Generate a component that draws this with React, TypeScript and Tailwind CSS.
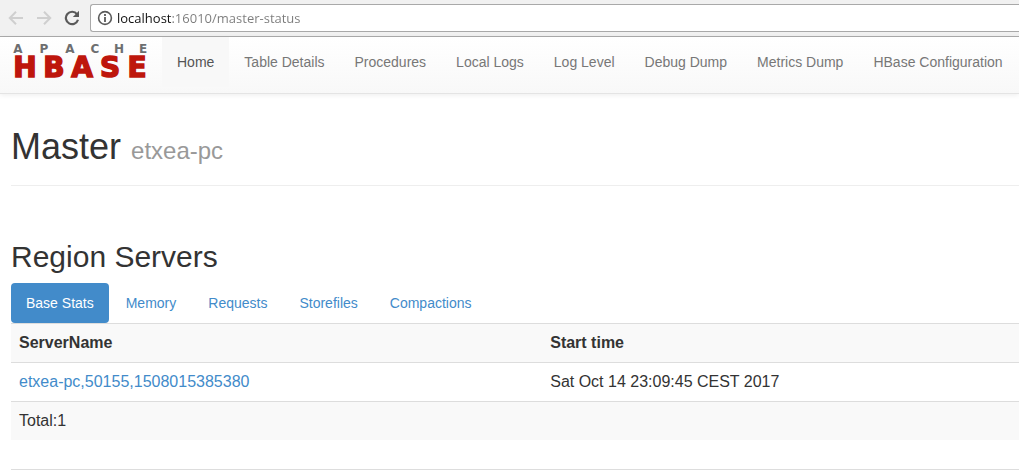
import { clsx } from 'clsx'

const navLinks = [
  'Home',
  'Table Details',
  'Procedures',
  'Local Logs',
  'Log Level',
  'Debug Dump',
  'Metrics Dump',
  'HBase Configuration',
]

const tabs = ['Base Stats', 'Memory', 'Requests', 'Storefiles', 'Compactions']

const BrowserBar = () => {
  return (
    <div className="flex items-center h-[37px] pl-2 bg-[#f1f1f1] border-b border-[#acacac]">
      <div className="flex items-center gap-3">
        <button aria-label="Back" className="text-[#cfcfcf]">
          <svg width="16" height="16" viewBox="0 0 16 16" fill="none" stroke="currentColor" strokeWidth="2">
            <path d="M15 8H2.5M8 1.8L1.8 8L8 14.2" />
          </svg>
        </button>
        <button aria-label="Forward" className="text-[#cfcfcf]">
          <svg width="16" height="16" viewBox="0 0 16 16" fill="none" stroke="currentColor" strokeWidth="2">
            <path d="M1 8H13.5M8 1.8L14.2 8L8 14.2" />
          </svg>
        </button>
        <button aria-label="Reload" className="text-[#5a5a5a]">
          <svg width="16" height="16" viewBox="0 0 16 16">
            <path d="M13 4.2A6.2 6.2 0 1 0 14 9.8" fill="none" stroke="currentColor" strokeWidth="2.2" />
            <path d="M15 0.8V7H8.8Z" fill="currentColor" />
          </svg>
        </button>
      </div>

      <div className="flex flex-1 items-center gap-1 h-7 ml-[10px] pl-[6px] bg-white border border-r-0 border-[#a9a9a9] rounded-l-[3px]">
        <svg width="16" height="16" viewBox="0 0 16 16" className="text-[#5a5a5a]">
          <circle cx="8" cy="8" r="6.4" fill="none" stroke="currentColor" strokeWidth="1.6" />
          <path d="M7.1 4.1h1.8v1.8H7.1zM7.1 7h1.8v5H7.1z" fill="currentColor" />
        </svg>
        <input
          type="text"
          aria-label="Address"
          defaultValue="localhost:16010/master-status"
          className="flex-1 min-w-0 outline-none font-['Open_Sans',sans-serif] text-[13px] leading-5 text-transparent bg-clip-text bg-[linear-gradient(to_right,#111_55px,#7b7b7b_55px)]"
        />
      </div>
    </div>
  )
}

const Logo = () => {
  return (
    <a href="#" aria-label="Apache HBase" className="block mt-1 font-['DejaVu_Sans',sans-serif] font-bold">
      <svg width="136" height="46" viewBox="0 0 136 46" textAnchor="middle">
        <text x="6 32 58 83 107 131" y="12" fontSize="12" fill="#6d6e70">
          APACHE
        </text>
        <text
          x="13 42 70 98 125"
          y="36"
          fontSize="28"
          fill="#be160c"
          stroke="#be160c"
          strokeWidth="1.5"
        >
          HBASE
        </text>
      </svg>
    </a>
  )
}

const Navbar = () => {
  return (
    <nav className="flex items-start h-[57px] pl-3 bg-linear-to-b from-white to-[#f8f8f8] border-b border-[#e4e4e4] shadow-[0_1px_5px_rgba(0,0,0,0.075)]">
      <Logo />
      <ul className="flex ml-[14px] text-sm">
        {navLinks.map((link, i) => (
          <li key={link}>
            <a
              href="#"
              className={clsx(
                'block px-[15px] py-[15px] leading-5 whitespace-nowrap',
                i === 0 ? 'text-[#555] bg-[#f8f8f8]' : 'text-[#777]',
              )}
            >
              {link}
            </a>
          </li>
        ))}
      </ul>
    </nav>
  )
}

const ServerTable = () => {
  return (
    <table className="w-full text-base leading-[22px] text-left">
      <thead>
        <tr className="bg-[#f9f9f9] border-t border-[#ddd]">
          <th scope="col" className="w-[52.7%] p-2 font-bold">ServerName</th>
          <th scope="col" className="p-2 font-bold">Start time</th>
        </tr>
      </thead>
      <tbody>
        <tr className="border-t border-[#ddd]">
          <td className="p-2">
            <a href="#" className="text-[#428bca]">etxea-pc,50155,1508015385380</a>
          </td>
          <td className="p-2">Sat Oct 14 23:09:45 CEST 2017</td>
        </tr>
        <tr className="bg-[#f9f9f9] border-t border-[#ddd]">
          <td className="p-2">Total:1</td>
          <td className="p-2"></td>
        </tr>
      </tbody>
    </table>
  )
}

export default function App() {
  return (
    <div className="bg-white overflow-hidden font-['Liberation_Sans',Arial,sans-serif] text-[#333]">
      <BrowserBar />
      <Navbar />

      <main className="pl-[11px]">
        {/* Page header */}
        <header className="pt-[33px] pb-[18px] border-b border-[#eee]">
          <h1 className="text-[36px] leading-10">
            Master <small className="text-[24px] leading-none text-[#999]">etxea-pc</small>
          </h1>
        </header>

        {/* Region servers */}
        <section className="pt-[54px]">
          <h2 className="text-[30px] leading-[33px]">Region Servers</h2>
          <div role="tablist" className="flex gap-[2px] mt-[10px] text-sm leading-5">
            {tabs.map((tab, i) => (
              <button
                key={tab}
                role="tab"
                aria-selected={i === 0}
                className={clsx(
                  'px-[15px] py-[10px] rounded-[4px]',
                  i === 0 ? 'bg-[#428bca] text-white' : 'text-[#428bca]',
                )}
              >
                {tab}
              </button>
            ))}
          </div>
          <ServerTable />
        </section>

        <hr className="mt-[29px] border-[#ddd]" />
      </main>
    </div>
  )
}
